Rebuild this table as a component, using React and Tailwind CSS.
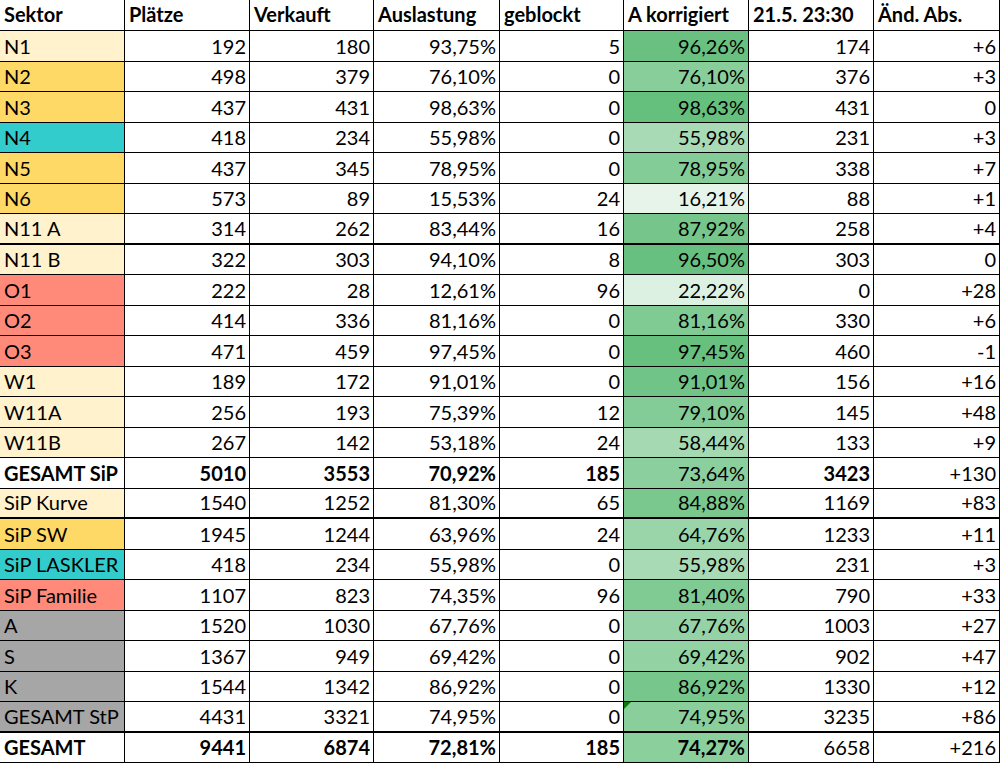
const LIGHT = 'bg-[#fff2cc]'
const GOLD = 'bg-[#ffd966]'
const TEAL = 'bg-[#33cccc]'
const SALMON = 'bg-[#ff8a7a]'
const GRAY = 'bg-[#a6a6a6]'

// [sektor, plaetze, verkauft, auslastung, geblockt, korrigiert, stand, aenderung]
const ROWS = [
  { c: ['N1', '192', '180', '93,75%', '5', '96,26%', '174', '+6'], bg: LIGHT },
  { c: ['N2', '498', '379', '76,10%', '0', '76,10%', '376', '+3'], bg: GOLD },
  { c: ['N3', '437', '431', '98,63%', '0', '98,63%', '431', '0'], bg: GOLD },
  { c: ['N4', '418', '234', '55,98%', '0', '55,98%', '231', '+3'], bg: TEAL },
  { c: ['N5', '437', '345', '78,95%', '0', '78,95%', '338', '+7'], bg: GOLD },
  { c: ['N6', '573', '89', '15,53%', '24', '16,21%', '88', '+1'], bg: GOLD },
  { c: ['N11 A', '314', '262', '83,44%', '16', '87,92%', '258', '+4'], bg: LIGHT, thick: true },
  { c: ['N11 B', '322', '303', '94,10%', '8', '96,50%', '303', '0'], bg: LIGHT },
  { c: ['O1', '222', '28', '12,61%', '96', '22,22%', '0', '+28'], bg: SALMON },
  { c: ['O2', '414', '336', '81,16%', '0', '81,16%', '330', '+6'], bg: SALMON },
  { c: ['O3', '471', '459', '97,45%', '0', '97,45%', '460', '-1'], bg: SALMON },
  { c: ['W1', '189', '172', '91,01%', '0', '91,01%', '156', '+16'], bg: LIGHT },
  { c: ['W11A', '256', '193', '75,39%', '12', '79,10%', '145', '+48'], bg: LIGHT },
  { c: ['W11B', '267', '142', '53,18%', '24', '58,44%', '133', '+9'], bg: LIGHT },
  { c: ['GESAMT SiP', '5010', '3553', '70,92%', '185', '73,64%', '3423', '+130'], bold: [0, 1, 2, 3, 4, 6] },
  { c: ['SiP Kurve', '1540', '1252', '81,30%', '65', '84,88%', '1169', '+83'], bg: LIGHT, thick: true },
  { c: ['SiP SW', '1945', '1244', '63,96%', '24', '64,76%', '1233', '+11'], bg: GOLD },
  { c: ['SiP LASKLER', '418', '234', '55,98%', '0', '55,98%', '231', '+3'], bg: TEAL },
  { c: ['SiP Familie', '1107', '823', '74,35%', '96', '81,40%', '790', '+33'], bg: SALMON },
  { c: ['A', '1520', '1030', '67,76%', '0', '67,76%', '1003', '+27'], bg: GRAY },
  { c: ['S', '1367', '949', '69,42%', '0', '69,42%', '902', '+47'], bg: GRAY },
  { c: ['K', '1544', '1342', '86,92%', '0', '86,92%', '1330', '+12'], bg: GRAY },
  { c: ['GESAMT StP', '4431', '3321', '74,95%', '0', '74,95%', '3235', '+86'], bg: GRAY, thick: true, flag: true },
  { c: ['GESAMT', '9441', '6874', '72,81%', '185', '74,27%', '6658', '+216'], bold: [0, 1, 2, 3, 4, 5] },
]

const HEAD = ['Sektor', 'Plätze', 'Verkauft', 'Auslastung', 'geblockt', 'A korrigiert', '21.5. 23:30', 'Änd. Abs.']

const GRID = 'grid grid-cols-[125px_125px_124px_126px_124px_125px_125px_126px]'

// white -> #63be7b colour scale, 0% .. 100%
function scale(txt) {
  const t = Math.min(1, parseFloat(txt.replace(',', '.')) / 100)
  const mix = (a, b) => Math.round(a + (b - a) * t)
  return `rgb(${mix(255, 99)}, ${mix(255, 190)}, ${mix(255, 123)})`
}

export default function App() {
  return (
    <div className="w-[1001px] h-[763px] bg-white text-black overflow-hidden text-[20px] leading-none" style={{ fontFamily: 'Lato, "Open Sans", sans-serif' }}>
      <div className={`${GRID} h-[31px] font-bold`}>
        {HEAD.map((h) => (
          <div key={h} className="flex items-end pb-[6px] px-[4px] border-r border-b border-black whitespace-nowrap">
            {h}
          </div>
        ))}
      </div>
      {ROWS.map((row, r) => (
        <div key={r} className={`${GRID} h-[30.5px]`}>
          {row.c.map((v, i) => (
            <div
              key={i}
              className={`relative flex items-end pb-[5px] px-[3px] border-r border-black whitespace-nowrap ${row.thick ? 'border-b-2' : 'border-b'} ${i === 0 ? `justify-start pl-[4px] ${row.bg ?? ''}` : 'justify-end'} ${row.bold?.includes(i) ? 'font-bold' : ''}`}
              style={i === 5 ? { backgroundColor: scale(v) } : undefined}
            >
              {i === 5 && row.flag && (
                <span className="absolute left-0 top-0 w-0 h-0 border-t-[7px] border-r-[7px] border-t-[#0b7a0b] border-r-transparent" />
              )}
              {v}
            </div>
          ))}
        </div>
      ))}
    </div>
  )
}
